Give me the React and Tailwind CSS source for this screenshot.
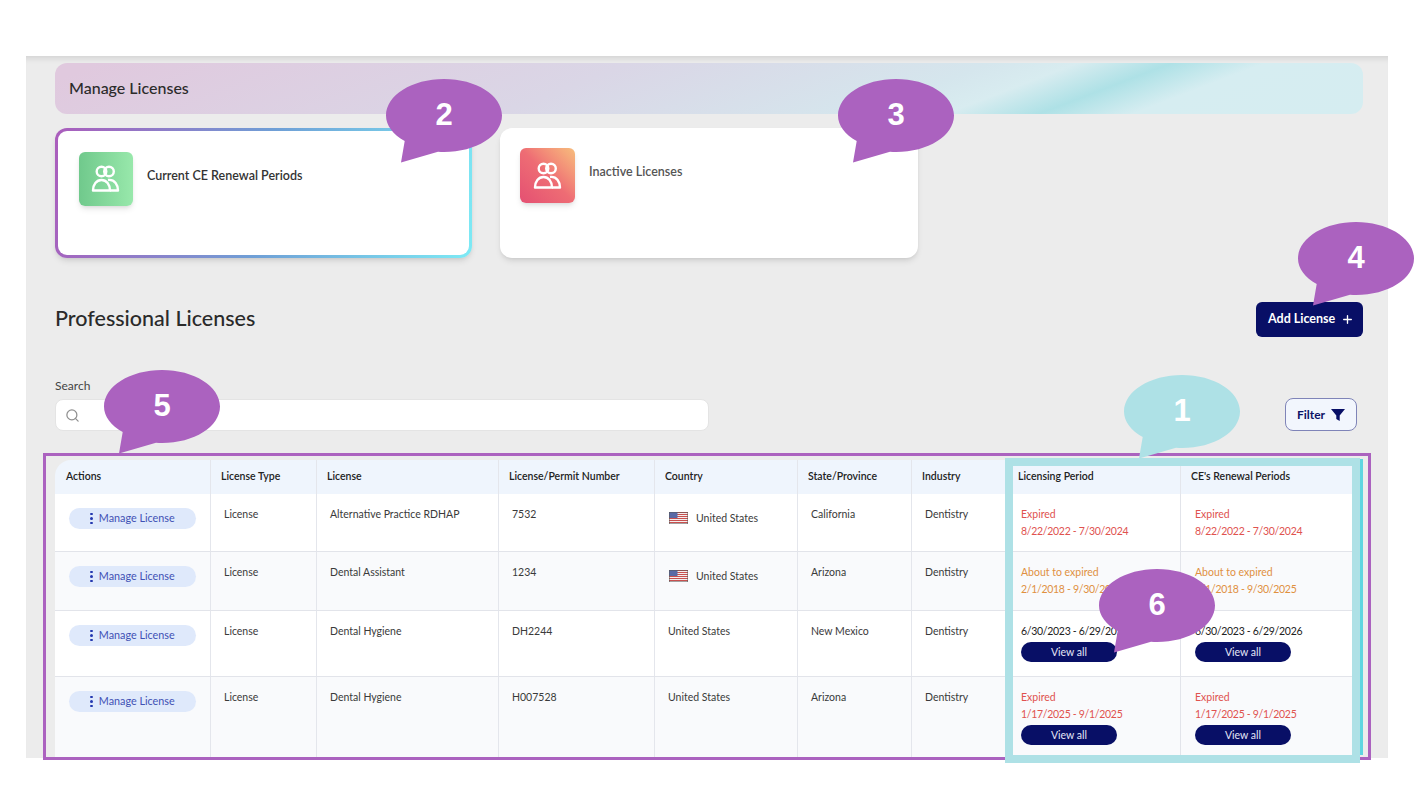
import { Search, Plus } from "lucide-react";

const COLS = "grid grid-cols-[156px_106px_182px_156px_143px_114px_96px_173px_171px]";

const rows = [
  {
    type: "License",
    license: "Alternative Practice RDHAP",
    number: "7532",
    flag: true,
    state: "California",
    industry: "Dentistry",
    height: "h-[58px]",
    bg: "bg-white",
    period: { status: "Expired", color: "text-[#e0524f]", dates: "8/22/2022 - 7/30/2024" },
    renewal: { status: "Expired", color: "text-[#e0524f]", dates: "8/22/2022 - 7/30/2024" },
  },
  {
    type: "License",
    license: "Dental Assistant",
    number: "1234",
    flag: true,
    state: "Arizona",
    industry: "Dentistry",
    height: "h-[59px]",
    bg: "bg-[#f9fafc]",
    period: { status: "About to expired", color: "text-[#e0903f]", dates: "2/1/2018 - 9/30/2025" },
    renewal: { status: "About to expired", color: "text-[#e0903f]", dates: "2/1/2018 - 9/30/2025" },
  },
  {
    type: "License",
    license: "Dental Hygiene",
    number: "DH2244",
    state: "New Mexico",
    industry: "Dentistry",
    height: "h-[66px]",
    bg: "bg-white",
    period: { color: "text-[#222]", dates: "6/30/2023 - 6/29/2026", view: true },
    renewal: { color: "text-[#222]", dates: "6/30/2023 - 6/29/2026", view: true },
  },
  {
    type: "License",
    license: "Dental Hygiene",
    number: "H007528",
    state: "Arizona",
    industry: "Dentistry",
    height: "h-[80px]",
    bg: "bg-[#f9fafc]",
    period: { status: "Expired", color: "text-[#e0524f]", dates: "1/17/2025 - 9/1/2025", view: true },
    renewal: { status: "Expired", color: "text-[#e0524f]", dates: "1/17/2025 - 9/1/2025", view: true },
  },
];

const headers = [
  "Actions",
  "License Type",
  "License",
  "License/Permit Number",
  "Country",
  "State/Province",
  "Industry",
  "Licensing Period",
  "CE's Renewal Periods",
];

const PeopleIcon = () => (
  <svg width="30" height="28" viewBox="0 0 30 28" fill="none" stroke="white" strokeWidth="2.4">
    <circle cx="10.500" cy="6.500" r="4.800" />
    <circle cx="18" cy="6.500" r="4.800" />
    <path d="M2 25.500c0-6 3.500-10.500 8.500-10.500s8.500 4.500 8.500 10.500z" strokeLinejoin="round" />
    <path d="M17 15c.6-.1 1-.1 1.500-.1 5 0 8.500 4.500 8.500 10.600h-8" strokeLinejoin="round" />
  </svg>
);

const UsFlag = () => (
  <svg width="19" height="12" viewBox="0 0 19 12" className="ml-px shrink-0">
    <rect width="19" height="12" fill="#f3eeee" />
    <path d="M0 .5h19M0 2.500h19M0 4.500h19M0 6.500h19M0 8.500h19M0 10.500h19" stroke="#c9504f" strokeWidth="1" />
    <rect width="8.500" height="6" fill="#5a6aa6" />
    <rect x=".25" y=".25" width="18.500" height="11.500" fill="none" stroke="#555" strokeWidth=".5" />
  </svg>
);

const Cell = ({ children }) => (
  <div className="border-r border-[#e4e6ec] px-[13px] pt-[13px] text-[10.5px] leading-[14px] text-[#3a3a3a]">
    {children}
  </div>
);

const PeriodCell = ({ data, last }) => (
  <div
    className={`flex flex-col pt-[13px] text-[10.5px] leading-[14px] ${data.color} ${
      last ? "pl-[14px]" : "border-r border-[#e2e4ea] pl-[13px]"
    }`}
  >
    {data.status && <span className="mb-[3px]">{data.status}</span>}
    <span className="tracking-[-0.3px]">{data.dates}</span>
    {data.view && (
      <button className="mt-1 h-5 w-24 rounded-full bg-[#080f66] text-[10.5px] text-[#e4e6f6]">View all</button>
    )}
  </div>
);

const Callout = ({ num, pos, fill = "#ab62bf" }) => (
  <div className={`absolute h-[84px] w-[116px] ${pos}`}>
    <svg width="116" height="84" viewBox="0 0 116 84" className="absolute inset-0">
      <path
        fill={fill}
        d="M58 0c32 0 58 16.300 58 36.500S90 73 58 73c-2 0-4-.1-6-.2L15 83.500l3.700-21.500C7 55.500 0 46.500 0 36.500 0 16.300 26 0 58 0z"
      />
    </svg>
    <span className="absolute left-0 top-[18px] w-full text-center font-['Liberation_Sans',sans-serif] text-[31px] font-bold leading-9 text-white">
      {num}
    </span>
  </div>
);

export default function App() {
  return (
    <div className="relative h-[792px] w-[1428px] overflow-hidden bg-white pt-14 font-['Lato','Noto_Sans',sans-serif]">
      <div className="ml-[26px] h-[702px] w-[1362px] bg-[#ececec] pl-[29px] pr-[25px] pt-[7px] shadow-[inset_0_7px_6px_-5px_rgba(0,0,0,0.12)]">
        {/* Title banner */}
        <div className="flex h-[51px] items-center rounded-xl bg-[linear-gradient(159deg,#e0c9de_3%,#dad6e6_40%,#d5e6ed_65%,#d8ecf0_71%,#aee1e6_77.5%,#d6edf1_84%,#d5edf1_100%)] pb-[2px] pl-[14px] text-base font-medium text-[#2b2b2b]">
          Manage Licenses
        </div>

        {/* Period cards */}
        <div className="mt-[14px] flex gap-7">
          <div className="h-[130px] w-[417px] rounded-xl bg-[linear-gradient(100deg,#ab5dbc_0%,#6f9fd6_50%,#7deaf5_100%)] p-[3px] shadow-md">
            <div className="flex h-full gap-[14px] rounded-[9px] bg-white pl-[21px] pt-[21px]">
              <div className="flex h-[54px] w-[54px] items-center justify-center rounded-md bg-gradient-to-r from-[#70c98c] to-[#98e8ab] shadow-md">
                <PeopleIcon />
              </div>
              <span className="mt-4 text-[12.5px] font-semibold leading-4 text-[#333]">Current CE Renewal Periods</span>
            </div>
          </div>
          <div className="flex h-[130px] w-[418px] gap-[14px] rounded-xl bg-white pl-5 pt-5 shadow-md">
            <div className="flex h-[55px] w-[55px] items-center justify-center rounded-md bg-gradient-to-tr from-[#e44f72] via-[#ee6c74] to-[#f6bd7c] shadow-md">
              <PeopleIcon />
            </div>
            <span className="mt-4 text-[12.5px] font-semibold leading-4 text-[#555]">Inactive Licenses</span>
          </div>
        </div>

        {/* Heading */}
        <div className="mt-[44px] flex h-[35px] items-center justify-between">
          <h1 className="pb-[2px] text-[21.5px] font-medium text-[#2a2a2a]">Professional Licenses</h1>
          <button className="flex h-[35px] w-[107px] items-center gap-[6px] rounded-md bg-[#080f66] pl-3 text-[12.5px] font-bold text-white">
            Add License <Plus size={13} strokeWidth={2.5} />
          </button>
        </div>

        {/* Search + filter */}
        <div className="mt-[41px] flex items-end justify-between pr-[6px]">
          <div className="w-[654px]">
            <div className="mb-[5px] text-xs leading-4 text-[#444]">Search</div>
            <div className="flex h-8 items-center rounded-lg border border-[#e4e4e4] bg-white pl-[9px]">
              <Search size={15} className="text-[#8f8f8f]" />
            </div>
          </div>
          <button className="flex h-[33px] w-[72px] items-center justify-center gap-[6px] rounded-lg border border-[#7f84b8] bg-[#f2f6fd] text-xs font-bold text-[#0c1266]">
            Filter
            <svg width="14" height="14" viewBox="0 0 14 14" fill="#080f66">
              <path d="M0 1h14L8.700 7.500V13l-3.400-2V7.500z" />
            </svg>
          </button>
        </div>

        {/* Table */}
        <div className="mt-[29px] w-[1297px] overflow-hidden rounded-tl-2xl">
          <div className={`${COLS} h-[34px] bg-[#eff5fd]`}>
            {headers.map((h) => (
              <div
                key={h}
                className="flex items-center border-r border-[#e4e6ec] pl-[10px] text-[10.5px] font-semibold text-[#222] first:pl-[11px] last:border-r-0"
              >
                {h}
              </div>
            ))}
          </div>
          {rows.map((r, i) => (
            <div key={i} className={`${COLS} ${r.height} ${r.bg} border-b border-[#e2e4ea] last:border-b-0`}>
              <div className="border-r border-[#e4e6ec] pl-[14px] pt-[14px]">
                <button className="flex h-[21px] w-[127px] items-center justify-center gap-[6px] rounded-full bg-[#dfe9fb] text-[10.8px] text-[#3f51b5]">
                  <span className="flex flex-col gap-[2px]">
                    <span className="h-[2.5px] w-[2.5px] rounded-full bg-[#2438b0]" />
                    <span className="h-[2.5px] w-[2.5px] rounded-full bg-[#2438b0]" />
                    <span className="h-[2.5px] w-[2.5px] rounded-full bg-[#2438b0]" />
                  </span>
                  Manage License
                </button>
              </div>
              <Cell>{r.type}</Cell>
              <Cell>{r.license}</Cell>
              <Cell>{r.number}</Cell>
              <Cell>
                {r.flag ? (
                  <div className="mt-[4px] flex items-center gap-2">
                    <UsFlag />
                    <span>United States</span>
                  </div>
                ) : (
                  "United States"
                )}
              </Cell>
              <Cell>{r.state}</Cell>
              <Cell>{r.industry}</Cell>
              <PeriodCell data={r.period} />
              <PeriodCell data={r.renewal} last />
            </div>
          ))}
        </div>
      </div>

      {/* Annotation layer over the screenshot */}
      <div className="absolute left-[43px] top-[453px] h-[307px] w-[1328px] border-[3px] border-[#ab62bf]" />
      <div className="absolute left-[1360px] top-[459px] h-[296px] w-[3px] bg-[#5fd5e0]" />
      <div className="absolute left-[1005px] top-[458px] h-[305px] w-[355px] border-[8px] border-[#aee1e6]" />
      <Callout num="1" pos="left-[1124px] top-[375px]" fill="#aee1e6" />
      <Callout num="2" pos="left-[386px] top-[79px]" />
      <Callout num="3" pos="left-[838px] top-[79px]" />
      <Callout num="4" pos="left-[1298px] top-[222px]" />
      <Callout num="5" pos="left-[104px] top-[370px]" />
      <Callout num="6" pos="left-[1099px] top-[569px]" />
    </div>
  );
}
